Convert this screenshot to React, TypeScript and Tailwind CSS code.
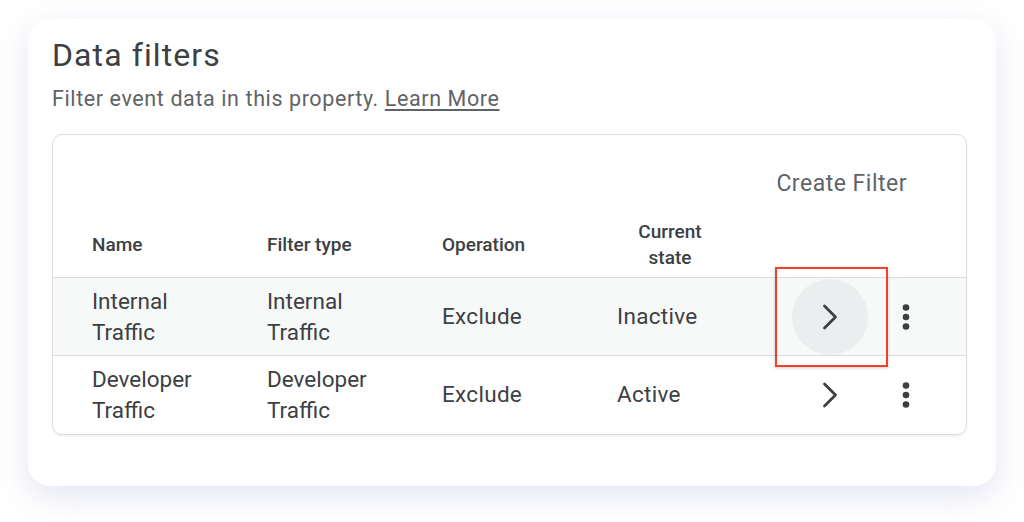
const rows = [
  { name: ["Internal", "Traffic"], type: ["Internal", "Traffic"], op: "Exclude", state: "Inactive", focused: true },
  { name: ["Developer", "Traffic"], type: ["Developer", "Traffic"], op: "Exclude", state: "Active", focused: false },
];

function Chevron() {
  return (
    <svg width="20" height="28" viewBox="0 0 20 28" fill="none">
      <path d="M4.5 3 L15.5 14 L4.5 25" stroke="#3c4043" strokeWidth="2.8" strokeLinecap="round" strokeLinejoin="round" />
    </svg>
  );
}

function Kebab() {
  return (
    <svg width="24" height="30" viewBox="0 0 24 30" fill="#3c4043">
      <circle cx="12" cy="5.5" r="3.3" />
      <circle cx="12" cy="15" r="3.3" />
      <circle cx="12" cy="24.5" r="3.3" />
    </svg>
  );
}

function TwoLine({ lines }: { lines: string[] }) {
  return (
    <div className="leading-[31px]">
      {lines.map((l) => (
        <div key={l}>{l}</div>
      ))}
    </div>
  );
}

export default function App() {
  return (
    <div className="min-h-[522px] w-[1024px] bg-white pt-[19px] pl-[28px] font-['Roboto',sans-serif]">
      <div className="h-[467px] w-[968px] rounded-[22px] bg-white px-[24px] pt-[17px] shadow-[0_10px_32px_rgba(90,100,170,0.17)]">
        <h1 className="text-[32px] leading-[38px] tracking-[1.1px] text-[#3c4043]">Data filters</h1>
        <p className="mt-[12px] text-[21.5px] leading-[26px] tracking-[0.6px] text-[#5f6368]">
          Filter event data in this property. <span className="underline underline-offset-[3px]">Learn More</span>
        </p>

        <div className="mt-[22px] w-[915px] rounded-[10px] border border-[#dadce0] shadow-[0_2px_2px_rgba(0,0,0,0.06)]">
          <div className="flex justify-end pt-[35px] pr-[59px]">
            <span className="text-[23px] leading-[28px] tracking-[0.5px] text-[#5f6368]">Create Filter</span>
          </div>

          <div className="mt-[21px] flex h-[59px] items-start border-b border-[#dadce0] pl-[39px] text-[19px] font-medium text-[#3c4043]">
            <div className="flex h-[52px] w-[175px] items-center">Name</div>
            <div className="flex h-[52px] w-[175px] items-center">Filter type</div>
            <div className="flex h-[52px] w-[175px] items-center">Operation</div>
            <div className="flex h-[52px] w-[106px] flex-col items-center justify-center leading-[26px]">
              <span>Current</span>
              <span>state</span>
            </div>
          </div>

          {rows.map((r, i) => (
            <div
              key={i}
              className={
                "flex h-[78px] items-center pl-[39px] text-[22.5px] text-[#3c4043] " +
                (r.focused ? "border-b border-[#dadce0] bg-[#f7f8f8]" : "rounded-b-[10px]")
              }
            >
              <div className="w-[175px]">
                <TwoLine lines={r.name} />
              </div>
              <div className="w-[175px]">
                <TwoLine lines={r.type} />
              </div>
              <div className="w-[175px] tracking-[0.3px]">{r.op}</div>
              <div className="w-[106px] tracking-[0.3px]">{r.state}</div>
              <div className="relative ml-[69px] flex h-[76px] w-[76px] items-center justify-center">
                {r.focused && (
                  <>
                    <div className="absolute inset-0 rounded-full bg-[#ecedee]" />
                    <div className="absolute top-[-12px] left-[-17px] h-[100px] w-[113px] border-2 border-[#f4402a] shadow-[0_1px_3px_rgba(0,0,0,0.2)]" />
                  </>
                )}
                <div className="relative flex">
                  <Chevron />
                </div>
              </div>
              <div className="ml-[26px] flex items-center">
                <Kebab />
              </div>
            </div>
          ))}
        </div>
      </div>
    </div>
  );
}
